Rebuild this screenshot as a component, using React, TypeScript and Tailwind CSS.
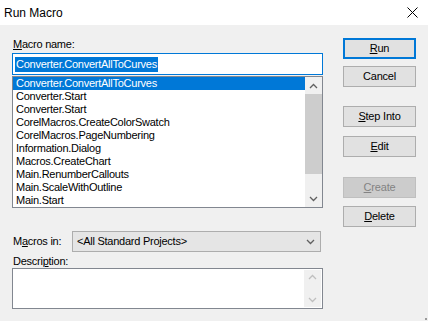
import React from 'react';

const macros = [
  'Converter.ConvertAllToCurves',
  'Converter.Start',
  'Converter.Start',
  'CorelMacros.CreateColorSwatch',
  'CorelMacros.PageNumbering',
  'Information.Dialog',
  'Macros.CreateChart',
  'Main.RenumberCallouts',
  'Main.ScaleWithOutline',
  'Main.Start',
];

function Chevron({ up, color = '#606060' }: { up?: boolean; color?: string }) {
  return (
    <svg width="9" height="6" viewBox="0 0 9 6">
      <path d={up ? 'M1 5 L4.5 1.5 L8 5' : 'M1 1 L4.5 4.5 L8 1'} fill="none" stroke={color} strokeWidth="1.3" />
    </svg>
  );
}

function Btn({ children, primary, disabled, className = '' }: { children: React.ReactNode; primary?: boolean; disabled?: boolean; className?: string }) {
  const base = 'w-[73px] h-[21px] flex items-center justify-center text-[11px] tracking-[-0.2px]';
  if (primary) return <div className={`${base} border-2 border-[#0078d7] bg-[#e1e1e1] text-black ${className}`}>{children}</div>;
  if (disabled) return <div className={`${base} border border-[#bfbfbf] bg-[#cccccc] text-[#838383] ${className}`}>{children}</div>;
  return <div className={`${base} border border-[#adadad] bg-[#e1e1e1] text-black ${className}`}>{children}</div>;
}

export default function App() {
  return (
    <div className="w-[428px] h-[321px] bg-[#f0f0f0] flex flex-col overflow-hidden relative" style={{ fontFamily: '"Liberation Sans", Arial, sans-serif' }}>
      {/* Title bar */}
      <div className="h-[25px] bg-white flex items-center justify-between pl-[4px] pr-[10px] shrink-0">
        <span className="text-[12px] text-black">Run Macro</span>
        <svg width="11" height="11" viewBox="0 0 11 11">
          <path d="M0.5 0.5 L10.5 10.5 M10.5 0.5 L0.5 10.5" stroke="#000" strokeWidth="1" />
        </svg>
      </div>

      <div className="flex flex-1">
        {/* Left column */}
        <div className="pl-[12px] pt-[12px] w-[323px] flex flex-col text-[11px] tracking-[-0.25px] text-black">
          <div className="h-[16px] leading-[14px] pl-[1px]"><span className="underline">M</span>acro name:</div>
          <div className="h-[22px] bg-white border border-[#0078d7] flex items-center pl-[2px]">
            <span className="bg-[#0078d7] text-white leading-[15px] px-[1px]">Converter.ConvertAllToCurves</span>
          </div>
          <div className="mt-[1px] h-[132px] bg-white border border-[#828790] flex">
            <div className="flex-1 flex flex-col">
              {macros.map((m, i) => (
                <div key={i} className={`h-[13px] leading-[13px] pl-[3px] ${i === 0 ? 'bg-[#0078d7] text-white' : ''}`}>{m}</div>
              ))}
            </div>
            <div className="w-[17px] bg-[#f0f0f0] flex flex-col">
              <div className="h-[17px] flex items-center justify-center"><Chevron up /></div>
              <div className="h-[80px] bg-[#cdcdcd]"></div>
              <div className="flex-1"></div>
              <div className="h-[17px] flex items-center justify-center"><Chevron /></div>
            </div>
          </div>

          <div className="mt-[23px] flex items-center">
            <div className="w-[60px] pl-[1px]">M<span className="underline">a</span>cros in:</div>
            <div className="w-[249px] h-[21px] bg-[#e5e5e5] border border-[#adadad] flex items-center justify-between pl-[4px] pr-[5px]">
              <span>&lt;All Standard Projects&gt;</span>
              <Chevron />
            </div>
          </div>

          <div className="mt-[3px] h-[13px] leading-[13px] pl-[1px]">Descri<span className="underline">p</span>tion:</div>
          <div className="h-[41px] bg-white border border-[#828790] flex justify-end">
            <div className="w-[17px] mr-[1px] my-[1px] bg-[#f0f0f0] flex flex-col justify-between py-[4px] items-center">
              <Chevron up color="#bfbfbf" />
              <Chevron color="#bfbfbf" />
            </div>
          </div>
        </div>

        {/* Right column */}
        <div className="ml-[20px] pt-[13px] flex flex-col">
          <Btn primary><span className="underline">R</span>un</Btn>
          <Btn className="mt-[7px]">Cancel</Btn>
          <Btn className="mt-[19px]"><span className="underline">S</span>tep Into</Btn>
          <Btn className="mt-[9px]"><span className="underline">E</span>dit</Btn>
          <Btn disabled className="mt-[20px]"><span className="underline">C</span>reate</Btn>
          <Btn className="mt-[8px]"><span className="underline">D</span>elete</Btn>
        </div>
      </div>

      {/* Resize grip */}
      <div className="absolute right-[1px] bottom-[1px] w-[2px] h-[2px] bg-[#9a9a9a]"></div>
    </div>
  );
}
